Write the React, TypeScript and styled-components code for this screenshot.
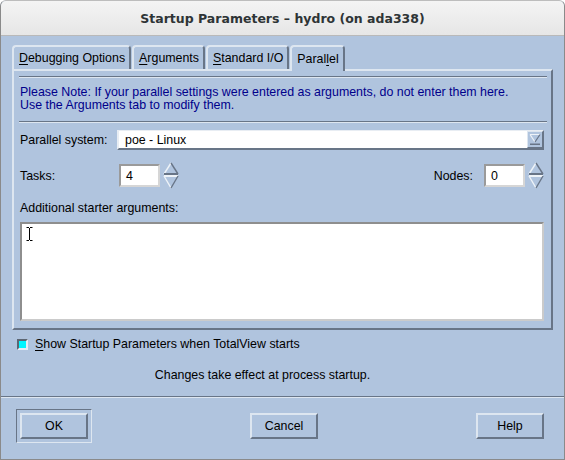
import React, { FC } from 'react';
import styled, { createGlobalStyle } from 'styled-components';

const BG = '#b0c4de';
const LIGHT = '#dde6f0';
const DARK = '#687587';

const GlobalStyle = createGlobalStyle`
  html, body {
    margin: 0;
    padding: 0;
    background: #ffffff;
  }
  body {
    font-family: 'Liberation Sans', Arial, sans-serif;
    font-size: 12.4px;
    color: #000;
  }
`;

const Window = styled.div`
  width: 565px;
  height: 460px;
  box-sizing: border-box;
  display: flex;
  flex-direction: column;
  border: 1px solid #8a8a8a;
  border-top-color: #bdbdbd;
  border-radius: 6px 6px 0 0;
  overflow: hidden;
  background: ${BG};
`;

const TitleBar = styled.div`
  height: 34px;
  flex: none;
  display: flex;
  align-items: center;
  justify-content: center;
  background: linear-gradient(#f4f4f4, #e6e6e6);
  border-bottom: 1px solid #b9b9b9;
  font-family: 'DejaVu Sans', sans-serif;
  font-weight: bold;
  font-size: 12.5px;
  color: #2e3436;
`;

const Body = styled.div`
  flex: 1;
  display: flex;
  flex-direction: column;
  padding-top: 7px;
`;

const TabStrip = styled.div`
  display: flex;
  align-items: flex-end;
  padding-left: 11px;
  gap: 1px;
  height: 26px;
`;

const Tab = styled.div<{ $active?: boolean }>`
  position: relative;
  z-index: ${(p) => (p.$active ? 1 : 0)};
  height: ${(p) => (p.$active ? 26 : 24)}px;
  margin-bottom: ${(p) => (p.$active ? -2 : 0)}px;
  box-sizing: border-box;
  display: flex;
  align-items: center;
  padding: 0 4px 0 5px;
  background: ${BG};
  border-top: 2px solid ${LIGHT};
  border-left: 2px solid ${LIGHT};
  border-right: 2px solid ${DARK};
  border-radius: 4px 4px 0 0;
  white-space: nowrap;
`;

const Mnemonic = styled.span`
  text-decoration: underline;
  text-underline-offset: 2px;
`;

const Panel = styled.div`
  margin: 0 11px 0 11px;
  height: 261px;
  box-sizing: border-box;
  display: flex;
  flex-direction: column;
  border-top: 2px solid ${LIGHT};
  border-left: 2px solid ${LIGHT};
  border-right: 2px solid ${DARK};
  border-bottom: 2px solid ${DARK};
  padding: 5px 7px 6px 6px;
`;

const Separator = styled.div<{ $inset?: boolean }>`
  height: 0;
  border-top: 1px solid ${DARK};
  border-bottom: 1px solid ${LIGHT};
  margin: ${(p) => (p.$inset ? '0 -3px 0 -1px' : '0')};
`;

const NoteText = styled.div`
  color: #00008b;
  line-height: 13px;
  margin: 8px 0 9px;
`;

const Row = styled.div<{ $gap: number }>`
  display: flex;
  align-items: center;
  margin-top: ${(p) => p.$gap}px;
`;

const FieldLabel = styled.span<{ $width?: number }>`
  flex: none;
  width: ${(p) => (p.$width ? `${p.$width}px` : 'auto')};
`;

const Spacer = styled.div`
  flex: 1;
`;

const Combo = styled.div`
  flex: 1;
  height: 20px;
  box-sizing: border-box;
  display: flex;
  align-items: center;
  background: #fff;
  border-top: 1px solid #e8edf3;
  border-left: 2px solid #e8edf3;
  border-bottom: 2px solid ${DARK};
  border-right: 1px solid ${DARK};
  padding-left: 6px;
`;

const ComboValue = styled.span`
  flex: 1;
`;

const ComboButton = styled.div`
  width: 16px;
  height: 17px;
  box-sizing: border-box;
  display: flex;
  align-items: center;
  justify-content: center;
  background: ${BG};
  border-top: 1px solid ${LIGHT};
  border-left: 1px solid ${LIGHT};
  border-right: 1px solid ${DARK};
  border-bottom: 1px solid ${DARK};
`;

const NumberInput = styled.div<{ $offset?: number }>`
  width: 41px;
  height: 23px;
  box-sizing: border-box;
  display: flex;
  align-items: center;
  margin-left: ${(p) => p.$offset ?? 0}px;
  padding-left: 5px;
  background: #fff;
  border-top: 2px solid #9a9a9a;
  border-left: 2px solid #9a9a9a;
  border-right: 2px solid #d6d6d6;
  border-bottom: 2px solid #d6d6d6;
`;

const SpinBox = styled.div`
  margin-left: 3px;
  display: flex;
  align-items: center;
`;

const SectionLabel = styled.div`
  margin-top: 12px;
  line-height: 14px;
`;

const TextArea = styled.div`
  margin-top: 7px;
  height: 99px;
  box-sizing: border-box;
  background: #fff;
  border-top: 2px solid #8e8e8e;
  border-left: 2px solid #8e8e8e;
  border-right: 2px solid #cbcbcb;
  border-bottom: 2px solid #cbcbcb;
  padding: 3px 4px;
`;

const CheckRow = styled.div`
  display: flex;
  align-items: center;
  gap: 7px;
  padding-left: 16px;
  margin-top: 7px;
  height: 14px;
`;

const CheckBox = styled.div<{ $checked: boolean }>`
  width: 11px;
  height: 11px;
  box-sizing: border-box;
  border-top: 2px solid #5c6673;
  border-left: 2px solid #5c6673;
  border-right: 2px solid #e6edf5;
  border-bottom: 2px solid #e6edf5;
  background: ${(p) => (p.$checked ? '#00f5ff' : BG)};
`;

const Footnote = styled.div`
  text-align: center;
  padding-right: 40px;
  margin-top: 17px;
  line-height: 14px;
`;

const FullSeparator = styled(Separator)`
  margin-top: 14px;
`;

const ButtonRow = styled.div`
  display: flex;
  align-items: center;
  justify-content: space-between;
  padding: 0 20px 0 15px;
  margin-top: 11px;
`;

const DefaultFrame = styled.div`
  padding: 3px;
  border-top: 1px solid ${DARK};
  border-left: 1px solid ${DARK};
  border-right: 1px solid ${LIGHT};
  border-bottom: 1px solid ${LIGHT};
`;

const Button = styled.button`
  width: 68px;
  height: 26px;
  box-sizing: border-box;
  margin: 0;
  padding: 0;
  background: ${BG};
  font-family: 'Liberation Sans', Arial, sans-serif;
  font-size: 12.4px;
  color: #000;
  border-top: 2px solid ${LIGHT};
  border-left: 2px solid ${LIGHT};
  border-right: 2px solid ${DARK};
  border-bottom: 2px solid ${DARK};
  border-radius: 0;
`;

const Spinner: FC = () => (
  <svg width="16" height="27" viewBox="0 0 16 27">
    <polygon points="8,1 15,12 1,12" fill={BG} />
    <line x1="8" y1="1" x2="1" y2="12" stroke="#eef3f8" strokeWidth="1.4" />
    <line x1="8" y1="1" x2="15" y2="12" stroke={DARK} strokeWidth="1.4" />
    <line x1="1" y1="12" x2="15" y2="12" stroke={DARK} strokeWidth="2" />
    <line x1="1" y1="14" x2="15" y2="14" stroke="#eef3f8" strokeWidth="2" />
    <line x1="1" y1="14" x2="8" y2="26" stroke="#eef3f8" strokeWidth="1.4" />
    <line x1="15" y1="14" x2="8" y2="26" stroke={DARK} strokeWidth="1.4" />
  </svg>
);

const ComboArrow: FC = () => (
  <svg width="12" height="13" viewBox="0 0 12 13">
    <line x1="1" y1="1.5" x2="11" y2="1.5" stroke="#eef3f8" strokeWidth="1.2" />
    <line x1="1" y1="1.5" x2="6" y2="9" stroke="#eef3f8" strokeWidth="1.2" />
    <line x1="11" y1="1.5" x2="6" y2="9" stroke={DARK} strokeWidth="1.2" />
    <rect x="1" y="10.5" width="10" height="1.5" fill={DARK} />
  </svg>
);

const IBeam: FC = () => (
  <svg width="7" height="14" viewBox="0 0 7 14">
    <path d="M0.5 0.5h2.5M4 0.5h2.5M3.5 1v12M0.5 13.5h2.5M4 13.5h2.5" stroke="#000" strokeWidth="1" fill="none" />
  </svg>
);

const App: FC = () => (
  <>
    <GlobalStyle />
    <Window>
      <TitleBar>Startup Parameters – hydro (on ada338)</TitleBar>
      <Body>
        <TabStrip>
          <Tab>
            <Mnemonic>D</Mnemonic>ebugging Options
          </Tab>
          <Tab>
            <Mnemonic>A</Mnemonic>rguments
          </Tab>
          <Tab>
            <Mnemonic>S</Mnemonic>tandard I/O
          </Tab>
          <Tab $active>
            Paral<Mnemonic>l</Mnemonic>el
          </Tab>
        </TabStrip>
        <Panel>
          <Separator $inset />
          <NoteText>
            Please Note: If your parallel settings were entered as arguments, do not enter them here.
            <br />
            Use the Arguments tab to modify them.
          </NoteText>
          <Separator $inset />
          <Row $gap={7}>
            <FieldLabel $width={97}>Parallel system:</FieldLabel>
            <Combo>
              <ComboValue>poe - Linux</ComboValue>
              <ComboButton>
                <ComboArrow />
              </ComboButton>
            </Combo>
          </Row>
          <Row $gap={12}>
            <FieldLabel $width={99}>Tasks:</FieldLabel>
            <NumberInput>4</NumberInput>
            <SpinBox>
              <Spinner />
            </SpinBox>
            <Spacer />
            <FieldLabel>Nodes:</FieldLabel>
            <NumberInput $offset={11}>0</NumberInput>
            <SpinBox>
              <Spinner />
            </SpinBox>
          </Row>
          <SectionLabel>Additional starter arguments:</SectionLabel>
          <TextArea>
            <IBeam />
          </TextArea>
        </Panel>
        <CheckRow>
          <CheckBox $checked />
          <span>
            <Mnemonic>S</Mnemonic>how Startup Parameters when TotalView starts
          </span>
        </CheckRow>
        <Footnote>Changes take effect at process startup.</Footnote>
        <FullSeparator />
        <ButtonRow>
          <DefaultFrame>
            <Button>OK</Button>
          </DefaultFrame>
          <Button>Cancel</Button>
          <Button>Help</Button>
        </ButtonRow>
      </Body>
    </Window>
  </>
);

export default App;
